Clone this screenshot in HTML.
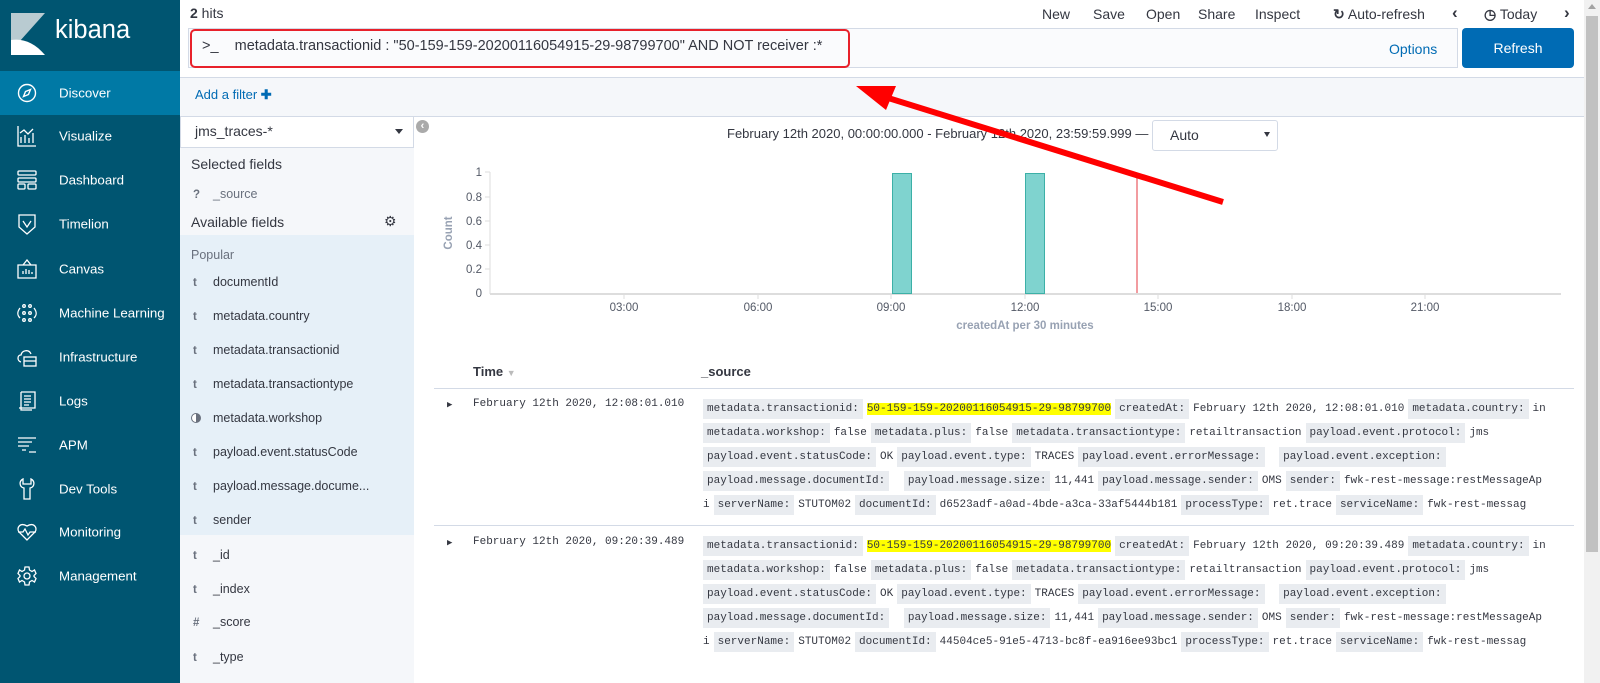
<!DOCTYPE html>
<html><head><meta charset="utf-8"><style>
*{box-sizing:border-box;margin:0;padding:0}
body{width:1600px;height:683px;overflow:hidden;background:#fff;font-family:"Liberation Sans",sans-serif;color:#343741;position:relative;font-size:13px}
.abs{position:absolute}
#side{left:0;top:0;width:180px;height:683px;background:#005571}
.nav{position:absolute;left:0;width:180px;height:44px;color:#fff;font-size:13.3px}
.nav span{position:absolute;left:59px;top:50%;transform:translateY(-50%)}
.nav svg{position:absolute;left:17px;top:50%;transform:translateY(-50%)}
.menu{top:6px;font-size:14px;color:#343741}
.fld{position:absolute;left:193px;font-size:12.5px;color:#343741}
.fld b{display:inline-block;width:20px;font-weight:bold;color:#69707d;font-size:11.5px}
.mono{font-family:"Liberation Mono",monospace;font-size:11px;color:#343741}
.ln{position:absolute;left:703px;white-space:nowrap;height:20px;line-height:20px}
.p{background:#e9ecf0;padding:0 4px;margin-right:4px;display:inline-block;line-height:20px}
.hl{background:#ffff00}
.v{margin-right:4px}
</style></head><body>

<div id="side" class="abs">
  <svg class="abs" style="left:11px;top:13px" width="34" height="42" viewBox="0 0 34 42"><polygon points="0,0 34,0 0,38" fill="#b9cbd1"/><path d="M0,27 C12,25 24,30 34,42 L0,42Z" fill="#fff"/></svg>
  <div class="abs" style="left:55px;top:16px;color:#fff;font-size:25.5px">kibana</div>
  <div class="nav" style="top:71px;background:#0079a5"><svg width="20" height="20" viewBox="0 0 20 20" fill="none" stroke="#fff" stroke-width="1.4"><circle cx="10" cy="10" r="8.5"/><path d="M13.5 6.5 L11.5 11.5 L6.5 13.5 L8.5 8.5Z"/></svg><span>Discover</span></div>
  <div class="nav" style="top:114px"><svg width="20" height="22" viewBox="0 0 20 22" fill="none" stroke="#fff" stroke-width="1.3"><path d="M1 1V21H19M4 18V12M8 18V10M12 18V13M16 18V8M3 8L7 5L11 9L16 4"/></svg><span>Visualize</span></div>
  <div class="nav" style="top:158px"><svg width="20" height="20" viewBox="0 0 20 20" fill="none" stroke="#fff" stroke-width="1.3"><rect x="1" y="1" width="18" height="4" rx="1"/><rect x="1" y="8" width="18" height="4" rx="1"/><rect x="1" y="14" width="7" height="5" rx="1"/><rect x="11" y="14" width="8" height="5" rx="1"/></svg><span>Dashboard</span></div>
  <div class="nav" style="top:202px"><svg width="20" height="22" viewBox="0 0 20 22" fill="none" stroke="#fff" stroke-width="1.3"><path d="M2 2H18V14L10 21L2 14Z M6 8L10 14L14 8"/></svg><span>Timelion</span></div>
  <div class="nav" style="top:247px"><svg width="20" height="20" viewBox="0 0 20 20" fill="none" stroke="#fff" stroke-width="1.3"><path d="M1 6H19V19H1Z M6 6L10 1L14 6 M6 15V12M9 15V10M12 15V11M15 15V13"/></svg><span>Canvas</span></div>
  <div class="nav" style="top:291px"><svg width="20" height="20" viewBox="0 0 20 20" fill="none" stroke="#fff" stroke-width="1.3"><circle cx="7" cy="3" r="1.3"/><circle cx="13" cy="3" r="1.3"/><circle cx="7" cy="17" r="1.3"/><circle cx="13" cy="17" r="1.3"/><circle cx="7" cy="10" r="1.3"/><circle cx="13" cy="10" r="1.3"/><path d="M3 5C0 9 0 12 3 15M17 5C20 9 20 12 17 15"/></svg><span>Machine Learning</span></div>
  <div class="nav" style="top:335px"><svg width="20" height="20" viewBox="0 0 20 20" fill="none" stroke="#fff" stroke-width="1.3"><path d="M4 15C0 14 0 8 4 8C5 3 12 2 14 7"/><rect x="7" y="10" width="12" height="9"/><path d="M7 14H19"/></svg><span>Infrastructure</span></div>
  <div class="nav" style="top:379px"><svg width="20" height="20" viewBox="0 0 20 20" fill="none" stroke="#fff" stroke-width="1.3"><path d="M4 1H18V17H2 M4 1V19H15 M7 5H14M7 8H14M7 11H14M7 14H12"/></svg><span>Logs</span></div>
  <div class="nav" style="top:423px"><svg width="20" height="16" viewBox="0 0 20 16" fill="none" stroke="#fff" stroke-width="1.3"><path d="M1 1H19M1 5H15M1 9H12M5 13H9M12 15H19"/></svg><span>APM</span></div>
  <div class="nav" style="top:467px"><svg width="20" height="22" viewBox="0 0 20 22" fill="none" stroke="#fff" stroke-width="1.3"><path d="M6 1C2 3 2 9 7 10V21H13V10C18 9 18 3 14 1V6H6Z"/></svg><span>Dev Tools</span></div>
  <div class="nav" style="top:510px"><svg width="20" height="20" viewBox="0 0 20 20" fill="none" stroke="#fff" stroke-width="1.3"><path d="M10 18L2 10C-1 6 3 0 10 4C17 0 21 6 18 10Z M1 10H6L8 7L11 13L13 10H19"/></svg><span>Monitoring</span></div>
  <div class="nav" style="top:554px"><svg width="20" height="20" viewBox="0 0 20 20" fill="none" stroke="#fff" stroke-width="1.3"><circle cx="10" cy="10" r="3"/><path d="M8 1H12L12.5 4L15 5.5L17.5 4L19 7.5L17 9.5V10.5L19 12.5L17.5 16L15 14.5L12.5 16L12 19H8L7.5 16L5 14.5L2.5 16L1 12.5L3 10.5V9.5L1 7.5L2.5 4L5 5.5L7.5 4Z"/></svg><span>Management</span></div>
</div>

<!-- top -->
<div class="abs" style="left:190px;top:5px;font-size:14px"><b>2</b> hits</div>
<div class="abs menu" style="left:1042px">New</div>
<div class="abs menu" style="left:1093px">Save</div>
<div class="abs menu" style="left:1146px">Open</div>
<div class="abs menu" style="left:1198px">Share</div>
<div class="abs menu" style="left:1255px">Inspect</div>
<div class="abs menu" style="left:1333px"><b>&#x21bb;</b> Auto-refresh</div>
<div class="abs menu" style="left:1452px;font-weight:bold;font-size:17px;top:3px">&#x2039;</div>
<div class="abs menu" style="left:1484px"><b>&#x25F7;</b> Today</div>
<div class="abs menu" style="left:1564px;font-weight:bold;font-size:17px;top:3px">&#x203a;</div>

<div class="abs" style="left:188px;top:28px;width:1270px;height:40px;background:#fafbfd;border:1px solid #d3dae6"></div>
<div class="abs" style="left:190px;top:29px;width:660px;height:39px;border:2px solid #e8212b;border-radius:5px"></div>
<div class="abs" style="left:202px;top:38px;font-size:14.5px;color:#343741">&gt;_&nbsp;&nbsp;&nbsp; metadata.transactionid : "50-159-159-20200116054915-29-98799700" AND NOT receiver :*</div>
<div class="abs" style="left:1389px;top:41px;font-size:14px;color:#006bb4">Options</div>
<div class="abs" style="left:1462px;top:28px;width:112px;height:40px;background:#006bb4;border-radius:4px;color:#fff;font-size:14px;text-align:center;line-height:40px">Refresh</div>

<div class="abs" style="left:180px;top:77px;width:1404px;height:40px;background:#f5f7fa;border-top:1px solid #d3dae6;border-bottom:1px solid #d3dae6"></div>
<div class="abs" style="left:195px;top:87px;font-size:13px;color:#006bb4">Add a filter <b>&#x271A;</b></div>

<!-- scrollbar -->
<div class="abs" style="left:1584px;top:0;width:16px;height:683px;background:#f1f1f1"></div>
<div class="abs" style="left:1586px;top:16px;width:12px;height:536px;background:#c1c1c1"></div>
<div class="abs" style="left:1588px;top:4px;width:0;height:0;border-left:4px solid transparent;border-right:4px solid transparent;border-bottom:5px solid #a3a3a3"></div>

<!-- left panel -->
<div class="abs" style="left:180px;top:117px;width:234px;height:566px;background:#f5f7fa"></div>
<div class="abs" style="left:180px;top:235px;width:234px;height:300px;background:#e6f0f8"></div>
<div class="abs" style="left:180px;top:116px;width:234px;height:32px;background:#fff;border:1px solid #d3dae6"></div>
<div class="abs" style="left:195px;top:123px;font-size:14px">jms_traces-*</div>
<div class="abs" style="left:395px;top:129px;border-left:4px solid transparent;border-right:4px solid transparent;border-top:5px solid #343741"></div>
<div class="abs" style="left:416px;top:120px;width:13px;height:13px;border-radius:50%;background:#aaa;color:#fff;font-size:11px;line-height:12px;text-align:center;font-weight:bold">&#x2039;</div>
<div class="abs" style="left:191px;top:156px;font-size:14px">Selected fields</div>
<div class="fld" style="top:187px"><b>?</b><span style="color:#69707d">_source</span></div>
<div class="abs" style="left:191px;top:214px;font-size:14px">Available fields</div>
<div class="abs" style="left:384px;top:213px;font-size:14px">&#x2699;</div>
<div class="abs" style="left:191px;top:248px;font-size:12.5px;color:#69707d">Popular</div>
<div class="fld" style="top:275px"><b>t</b>documentId</div>
<div class="fld" style="top:309px"><b>t</b>metadata.country</div>
<div class="fld" style="top:343px"><b>t</b>metadata.transactionid</div>
<div class="fld" style="top:377px"><b>t</b>metadata.transactiontype</div>
<div class="fld" style="top:411px"><b><span style="display:inline-block;width:10px;height:10px;border-radius:50%;border:1.5px solid #69707d;background:linear-gradient(90deg,#fff 50%,#69707d 50%);vertical-align:-1px;margin-left:-2px"></span></b>metadata.workshop</div>
<div class="fld" style="top:445px"><b>t</b>payload.event.statusCode</div>
<div class="fld" style="top:479px"><b>t</b>payload.message.docume...</div>
<div class="fld" style="top:513px"><b>t</b>sender</div>
<div class="fld" style="top:548px"><b>t</b>_id</div>
<div class="fld" style="top:582px"><b>t</b>_index</div>
<div class="fld" style="top:615px"><b>#</b>_score</div>
<div class="fld" style="top:650px"><b>t</b>_type</div>

<!-- chart header -->
<div class="abs" style="left:727px;top:126px;font-size:13px">February 12th 2020, 00:00:00.000 - February 12th 2020, 23:59:59.999 —</div>
<div class="abs" style="left:1152px;top:120px;width:126px;height:31px;border:1px solid #d3dae6;border-radius:3px;background:#fff"></div>
<div class="abs" style="left:1170px;top:127px;font-size:14px">Auto</div>
<div class="abs" style="left:1264px;top:132px;border-left:3px solid transparent;border-right:3px solid transparent;border-top:5px solid #343741"></div>

<svg class="abs" style="left:420px;top:160px" width="1160" height="180" viewBox="420 160 1160 180">
  <g font-family="Liberation Sans" font-size="11.5" fill="#535966">
    <line x1="490" y1="172" x2="490" y2="294" stroke="#ddd"/>
    <line x1="490" y1="294" x2="1561" y2="294" stroke="#ddd" stroke-width="2"/>
    <g text-anchor="end">
      <text x="482" y="176">1</text><text x="482" y="201">0.8</text><text x="482" y="225">0.6</text><text x="482" y="249">0.4</text><text x="482" y="273">0.2</text><text x="482" y="297">0</text>
    </g>
    <g stroke="#ddd"><line x1="485" y1="172" x2="490" y2="172"/><line x1="485" y1="197" x2="490" y2="197"/><line x1="485" y1="221" x2="490" y2="221"/><line x1="485" y1="245" x2="490" y2="245"/><line x1="485" y1="269" x2="490" y2="269"/>
    <line x1="624" y1="294" x2="624" y2="299"/><line x1="758" y1="294" x2="758" y2="299"/><line x1="891" y1="294" x2="891" y2="299"/><line x1="1025" y1="294" x2="1025" y2="299"/><line x1="1158" y1="294" x2="1158" y2="299"/><line x1="1292" y1="294" x2="1292" y2="299"/><line x1="1425" y1="294" x2="1425" y2="299"/></g>
    <g text-anchor="middle">
      <text x="624" y="311">03:00</text><text x="758" y="311">06:00</text><text x="891" y="311">09:00</text><text x="1025" y="311">12:00</text><text x="1158" y="311">15:00</text><text x="1292" y="311">18:00</text><text x="1425" y="311">21:00</text>
      <text x="1025" y="329" font-weight="bold" fill="#98a2b3">createdAt per 30 minutes</text>
      <text x="0" y="0" font-weight="bold" fill="#98a2b3" transform="translate(452,233) rotate(-90)">Count</text>
    </g>
  </g>
  <rect x="892.5" y="173.5" width="19" height="120" fill="#7fd3cf" stroke="#3cb0a7"/>
  <rect x="1025.5" y="173.5" width="19" height="120" fill="#7fd3cf" stroke="#3cb0a7"/>
  <line x1="1137" y1="173" x2="1137" y2="293" stroke="#f29ca0" stroke-width="2"/>
</svg>

<!-- table -->
<div class="abs" style="left:473px;top:364px;font-size:13px;font-weight:bold">Time <span style="color:#bbb;font-size:9px">&#x25BC;</span></div>
<div class="abs" style="left:701px;top:364px;font-size:13px;font-weight:bold">_source</div>
<div class="abs" style="left:434px;top:388px;width:1140px;height:1px;background:#d3dae6"></div>
<div class="abs" style="left:434px;top:525px;width:1140px;height:1px;background:#d3dae6"></div>

<div class="abs mono" style="left:447px;top:400px;font-size:9px">&#x25B6;</div>
<div class="abs mono" style="left:473px;top:398px">February 12th 2020, 12:08:01.010</div>
<div class="mono">
<div class="ln" style="top:399px"><span class="p">metadata.transactionid:</span><span class="hl v">50-159-159-20200116054915-29-98799700</span><span class="p">createdAt:</span><span class="v">February 12th 2020, 12:08:01.010</span><span class="p">metadata.country:</span><span>in</span></div>
<div class="ln" style="top:423px"><span class="p">metadata.workshop:</span><span class="v">false</span><span class="p">metadata.plus:</span><span class="v">false</span><span class="p">metadata.transactiontype:</span><span class="v">retailtransaction</span><span class="p">payload.event.protocol:</span><span>jms</span></div>
<div class="ln" style="top:447px"><span class="p">payload.event.statusCode:</span><span class="v">OK</span><span class="p">payload.event.type:</span><span class="v">TRACES</span><span class="p">payload.event.errorMessage:</span><span class="v"> </span><span class="p">payload.event.exception:</span></div>
<div class="ln" style="top:471px"><span class="p">payload.message.documentId:</span><span class="v"> </span><span class="p">payload.message.size:</span><span class="v">11,441</span><span class="p">payload.message.sender:</span><span class="v">OMS</span><span class="p">sender:</span><span>fwk-rest-message:restMessageAp</span></div>
<div class="ln" style="top:495px"><span class="v">i</span><span class="p">serverName:</span><span class="v">STUTOM02</span><span class="p">documentId:</span><span class="v">d6523adf-a0ad-4bde-a3ca-33af5444b181</span><span class="p">processType:</span><span class="v">ret.trace</span><span class="p">serviceName:</span><span>fwk-rest-messag</span></div>
</div>

<div class="abs mono" style="left:447px;top:538px;font-size:9px">&#x25B6;</div>
<div class="abs mono" style="left:473px;top:536px">February 12th 2020, 09:20:39.489</div>
<div class="mono">
<div class="ln" style="top:536px"><span class="p">metadata.transactionid:</span><span class="hl v">50-159-159-20200116054915-29-98799700</span><span class="p">createdAt:</span><span class="v">February 12th 2020, 09:20:39.489</span><span class="p">metadata.country:</span><span>in</span></div>
<div class="ln" style="top:560px"><span class="p">metadata.workshop:</span><span class="v">false</span><span class="p">metadata.plus:</span><span class="v">false</span><span class="p">metadata.transactiontype:</span><span class="v">retailtransaction</span><span class="p">payload.event.protocol:</span><span>jms</span></div>
<div class="ln" style="top:584px"><span class="p">payload.event.statusCode:</span><span class="v">OK</span><span class="p">payload.event.type:</span><span class="v">TRACES</span><span class="p">payload.event.errorMessage:</span><span class="v"> </span><span class="p">payload.event.exception:</span></div>
<div class="ln" style="top:608px"><span class="p">payload.message.documentId:</span><span class="v"> </span><span class="p">payload.message.size:</span><span class="v">11,441</span><span class="p">payload.message.sender:</span><span class="v">OMS</span><span class="p">sender:</span><span>fwk-rest-message:restMessageAp</span></div>
<div class="ln" style="top:632px"><span class="v">i</span><span class="p">serverName:</span><span class="v">STUTOM02</span><span class="p">documentId:</span><span class="v">44504ce5-91e5-4713-bc8f-ea916ee93bc1</span><span class="p">processType:</span><span class="v">ret.trace</span><span class="p">serviceName:</span><span>fwk-rest-messag</span></div>
</div>

<!-- arrow -->
<svg class="abs" style="left:0;top:0" width="1600" height="683">
  <line x1="1223" y1="202" x2="885" y2="97" stroke="#f00" stroke-width="6"/>
  <polygon points="856,86 896,86 886,110" fill="#f00"/>
</svg>
</body></html>
